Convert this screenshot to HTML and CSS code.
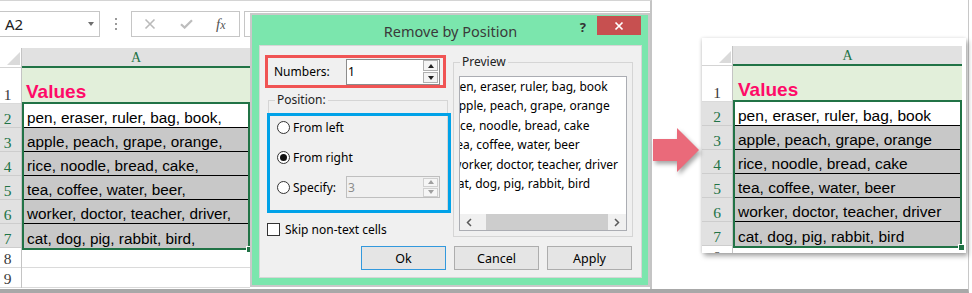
FILE: index.html
```html
<!DOCTYPE html>
<html>
<head>
<meta charset="utf-8">
<title>Remove by Position</title>
<link rel="stylesheet" href="styles.css">
</head>
<body>
<div class="frame">
  <div class="shot-left">
    <div class="fbar">
      <div class="namebox"><span class="nb-text">A2</span><span class="nb-arrow"></span></div>
      <div class="fdots"><i></i><i></i><i></i></div>
      <div class="fbtns">
        <svg class="ico" width="12" height="12" viewBox="0 0 12 12"><path d="M1.5 1.5L10.5 10.5M10.5 1.5L1.5 10.5" stroke="#bababa" stroke-width="1.6" fill="none"/></svg>
        <svg class="ico" width="13" height="10" viewBox="0 0 13 10"><path d="M1 5.2L4.6 8.6L12 1.2" stroke="#bdbdbd" stroke-width="2.2" fill="none"/></svg>
        <span class="fx">f<span class="fx-x">x</span></span>
      </div>
      <div class="finput"></div>
    </div>
    <div class="sheet">
      <div class="rowheads">
        <div class="corner"><span class="tri"></span></div>
        <div class="rh rh1">1</div>
        <div class="rh rhs">2</div>
        <div class="rh rhs">3</div>
        <div class="rh rhs">4</div>
        <div class="rh rhs">5</div>
        <div class="rh rhs">6</div>
        <div class="rh rhs">7</div>
        <div class="rh rh8">8</div>
        <div class="rh rh8">9</div>
      </div>
      <div class="col-a">
        <div class="colhead">A</div>
        <div class="c1"><span class="values">Values</span></div>
        <div class="selbox">
          <div class="d white">pen, eraser, ruler, bag, book,</div>
          <div class="d">apple, peach, grape, orange,</div>
          <div class="d">rice, noodle, bread, cake,</div>
          <div class="d">tea, coffee, water, beer,</div>
          <div class="d">worker, doctor, teacher, driver,</div>
          <div class="d last">cat, dog, pig, rabbit, bird,</div>
          <span class="handle"></span>
        </div>
        <div class="empty e8"></div>
        <div class="empty e9"></div>
      </div>
    </div>

    <div class="dialog">
      <div class="titlebar">
        <span></span>
        <span class="title">Remove by Position</span>
        <div class="tb-right">
          <span class="help">?</span>
          <span class="close"><svg width="10" height="10" viewBox="0 0 10 10"><path d="M1.5 1.5L8.5 8.5M8.5 1.5L1.5 8.5" stroke="#fff" stroke-width="1.7" fill="none"/></svg></span>
        </div>
      </div>
      <div class="panel">
        <div class="cols">
          <div class="left-col">
            <div class="numbox">
              <span class="lbl">Numbers:</span>
              <div class="spin">
                <span class="spin-val">1</span>
                <div class="spin-btns"><span class="sb up"></span><span class="sb down"></span></div>
              </div>
            </div>
            <fieldset class="grp pos">
              <legend>Position:</legend>
              <div class="bluebox">
                <div class="radio"><span class="rb"></span>From left</div>
                <div class="radio"><span class="rb on"></span>From right</div>
                <div class="radio"><span class="rb"></span>Specify:
                  <div class="spin dis">
                    <span class="spin-val">3</span>
                    <div class="spin-btns"><span class="sb up"></span><span class="sb down"></span></div>
                  </div>
                </div>
              </div>
            </fieldset>
            <div class="chk"><span class="cb"></span>Skip non-text cells</div>
          </div>
          <fieldset class="grp preview">
            <legend>Preview</legend>
            <div class="listbox">
              <div class="lines">
                <div>pen, eraser, ruler, bag, book</div>
                <div>apple, peach, grape, orange</div>
                <div>rice, noodle, bread, cake</div>
                <div>tea, coffee, water, beer</div>
                <div>worker, doctor, teacher, driver</div>
                <div>cat, dog, pig, rabbit, bird</div>
              </div>
              <div class="hscroll">
                <span class="sa"><svg width="6" height="9" viewBox="0 0 6 9"><path d="M5 1L1.5 4.5L5 8" stroke="#5a5a5a" stroke-width="1.5" fill="none"/></svg></span>
                <span class="thumb"></span>
                <span class="sa"><svg width="6" height="9" viewBox="0 0 6 9"><path d="M1 1L4.5 4.5L1 8" stroke="#5a5a5a" stroke-width="1.5" fill="none"/></svg></span>
              </div>
            </div>
          </fieldset>
        </div>
        <div class="btns">
          <button class="btn def">Ok</button>
          <button class="btn">Cancel</button>
          <button class="btn">Apply</button>
        </div>
      </div>
    </div>
  </div>

  <svg class="arrow" width="50" height="50" viewBox="0 0 50 50"><polygon points="1,13 25,13 25,2 47,24 25,46 25,35 1,35" fill="#ea6a7a"/></svg>

  <div class="shot-right">
    <div class="rowheads rowheads-r">
      <div class="corner corner-r"><span class="tri tri-r"></span></div>
      <div class="rh rh1">1</div>
      <div class="rh rhs">2</div>
      <div class="rh rhs">3</div>
      <div class="rh rhs">4</div>
      <div class="rh rhs">5</div>
      <div class="rh rhs">6</div>
      <div class="rh rhs">7</div>
      <div class="rh rh8">8</div>
    </div>
    <div class="col-a col-a-r">
      <div class="colhead">A</div>
      <div class="c1 c1-r"><span class="values">Values</span></div>
      <div class="selbox">
        <div class="d dr white">pen, eraser, ruler, bag, book</div>
        <div class="d dr">apple, peach, grape, orange</div>
        <div class="d dr">rice, noodle, bread, cake</div>
        <div class="d dr">tea, coffee, water, beer</div>
        <div class="d dr">worker, doctor, teacher, driver</div>
        <div class="d dr last">cat, dog, pig, rabbit, bird</div>
        <span class="handle"></span>
      </div>
      <div class="empty e8"></div>
    </div>
    <div class="col-b"></div>
  </div>
</div>
</body>
</html>
```

FILE: styles.css
```css
* { box-sizing: border-box; }
html, body { margin: 0; padding: 0; }
body {
  width: 972px;
  height: 293px;
  overflow: hidden;
  background: #fff;
  font-family: "Liberation Sans", Arial, sans-serif;
}
.frame {
  width: 969px;
  height: 293px;
  border-right: 1px solid #c8c8c8;
  border-bottom: 4px solid #a8a8a8;
  display: flex;
  align-items: flex-start;
}

/* ---------- left screenshot ---------- */
.shot-left {
  position: relative;
  width: 652px;
  height: 289px;
  border-top: 1px solid #d4d4d4;
  border-right: 2px solid #c4c4c4;
  overflow: hidden;
  background: #fff;
  flex: none;
}
.fbar {
  display: flex;
  align-items: center;
  height: 26px;
  margin-top: 10px;
}
.namebox {
  width: 100px;
  height: 26px;
  border: 1px solid #c6c6c6;
  border-left: none;
  display: flex;
  align-items: center;
  padding-left: 5px;
  font-family: "Noto Sans", sans-serif;
  font-size: 15px;
  color: #222;
}
.nb-arrow {
  margin-left: auto;
  margin-right: 5px;
  width: 0;
  height: 0;
  border-left: 3.5px solid transparent;
  border-right: 3.5px solid transparent;
  border-top: 4px solid #6e6e6e;
}
.fdots {
  width: 31px;
  display: flex;
  flex-direction: column;
  align-items: center;
  gap: 3px;
}
.fdots i {
  display: block;
  width: 2px;
  height: 2px;
  background: #9a9a9a;
}
.fbtns {
  width: 109px;
  height: 26px;
  border: 1px solid #c6c6c6;
  display: flex;
  align-items: center;
  gap: 24px;
  padding-left: 12px;
}
.ico { display: block; }
.fx {
  font-family: "Liberation Serif", serif;
  font-style: italic;
  font-size: 15px;
  color: #555;
  margin-left: -1px;
}
.fx-x { font-size: 12px; }
.finput {
  margin-left: 4px;
  flex: 1;
  height: 26px;
  border: 1px solid #c6c6c6;
  border-right: none;
}

.sheet {
  display: flex;
  margin-top: 11px;
}
.rowheads {
  width: 22px;
  border-right: 1px solid #c4c4c4;
  flex: none;
}
.corner {
  height: 20px;
  border-bottom: 1px solid #d4d4d4;
  display: flex;
  justify-content: flex-end;
  align-items: flex-end;
  padding: 0 1px 2px 0;
}
.tri {
  width: 0;
  height: 0;
  border-left: 13px solid transparent;
  border-bottom: 13px solid #dadada;
}
.rh {
  display: flex;
  align-items: flex-end;
  justify-content: center;
  padding-right: 6px;
  font-family: "Liberation Serif", serif;
  font-size: 15.5px;
  line-height: 16px;
  color: #3a3a3a;
  border-bottom: 1px solid #dadada;
  height: 24px;
  background: #fff;
}
.rh1 { height: 36px; }
.rh8 { height: 20px; }
.rhs {
  background: #e1e1e1;
  color: #217346;
  border-bottom-color: #cdcdcd;
}

.col-a { width: 228px; flex: none; }
.colhead {
  height: 20px;
  background: #e1e1e1;
  border-bottom: 2px solid #217346;
  text-align: center;
  font-family: "Liberation Serif", serif;
  font-size: 14px;
  line-height: 16px;
  padding-top: 2px;
  color: #217346;
}
.c1 {
  height: 34px;
  background: #e2efda;
  display: flex;
  align-items: flex-end;
  padding-left: 4px;
}
.values {
  font-weight: bold;
  font-size: 19px;
  line-height: 20px;
  color: #ff0a68;
}
.selbox {
  position: relative;
  border: 2px solid #217346;
}
.d {
  height: 24px;
  display: flex;
  align-items: flex-end;
  padding-left: 3px;
  font-size: 15.3px;
  line-height: 18px;
  background: #c8c8c8;
  border-bottom: 1px solid #000;
  white-space: nowrap;
  overflow: hidden;
  color: #000;
}
.d.white { background: #fff; }
.d.last { border-bottom: none; }
.handle {
  position: absolute;
  right: -5px;
  bottom: -5px;
  width: 7px;
  height: 7px;
  background: #217346;
  border: 1px solid #fff;
}
.empty {
  border-bottom: 1px solid #dadada;
  background: #fff;
}
.e8 { height: 18px; }
.e9 { height: 20px; }

/* ---------- dialog ---------- */
.dialog {
  position: absolute;
  left: 250px;
  top: 12px;
  width: 400px;
  height: 274px;
  border: 2px solid #c9c9c9;
  background: #7be6ad;
  padding: 0 6px 7px 7px;
  display: flex;
  flex-direction: column;
  font-family: "Noto Sans", sans-serif;
}
.titlebar {
  height: 30px;
  flex: none;
  display: grid;
  grid-template-columns: 1fr auto 1fr;
  align-items: center;
}
.title {
  font-size: 14.5px;
  color: #3a3a3a;
  padding-top: 1px;
}
.tb-right {
  display: flex;
  justify-content: flex-end;
  align-items: flex-start;
  align-self: start;
  height: 30px;
}
.help {
  font-weight: bold;
  font-size: 13px;
  line-height: 16px;
  color: #333;
  margin-top: 4px;
  margin-right: 11px;
}
.close {
  width: 44px;
  height: 19px;
  margin-top: 1px;
  margin-right: 1px;
  background: #c75050;
  display: flex;
  align-items: center;
  justify-content: center;
}
.close svg { display: block; }

.panel {
  height: 233px;
  flex: none;
  background: #f0f0f0;
  border: 1px solid #d6d6d6;
  padding: 8px 8px 0 5px;
  font-size: 12px;
  color: #000;
}
.cols {
  display: flex;
  gap: 2px;
  align-items: flex-start;
}
.left-col {
  width: 186px;
  padding-top: 1px;
}
.numbox {
  width: 181px;
  height: 33px;
  border: 3px solid #f05454;
  display: flex;
  align-items: center;
  padding-left: 6px;
}
.numbox .spin {
  margin-left: auto;
  margin-right: 3px;
  height: 26px;
}
.spin {
  width: 94px;
  display: flex;
  align-items: center;
  border: 1px solid #8c8c8c;
  background: #fff;
  padding-left: 1px;
}
.spin-val { flex: 1; }
.spin-btns {
  display: flex;
  flex-direction: column;
  gap: 1px;
  margin-right: 1px;
  width: 15px;
}
.sb {
  height: 11px;
  border: 1px solid #b0b0b0;
  background: #f4f4f4;
  display: flex;
  align-items: center;
  justify-content: center;
}
.sb::before {
  content: "";
  width: 0;
  height: 0;
  border-left: 3.5px solid transparent;
  border-right: 3.5px solid transparent;
}
.sb.up::before { border-bottom: 4px solid #222; }
.sb.down::before { border-top: 4px solid #222; }

.spin.dis {
  margin-left: auto;
  margin-right: 8px;
  height: 22px;
  background: #f0f0f0;
  border-color: #bfbfbf;
  color: #8c8c8c;
}
.spin.dis .sb {
  height: 9px;
  border-color: #d0d0d0;
  background: #f6f6f6;
}
.spin.dis .sb.up::before { border-bottom-color: #a0a0a0; }
.spin.dis .sb.down::before { border-top-color: #a0a0a0; }

.grp {
  margin: 0;
  padding: 0;
  border: 1px solid #d5d5d5;
  min-width: 0;
}
.grp legend {
  margin-left: 6px;
  padding: 0 2px;
  line-height: 16px;
  color: #222;
}
.pos {
  margin: 4px 0 0 3px;
  width: 180px;
}
.bluebox {
  margin: 5px 0 -2px -2px;
  width: 184px;
  height: 100px;
  border: 3px solid #00a2e8;
  padding-left: 7px;
  display: flex;
  flex-direction: column;
  gap: 8px;
}
.radio {
  height: 22px;
  display: flex;
  align-items: center;
}
.rb {
  width: 13px;
  height: 13px;
  border: 1px solid #333;
  border-radius: 50%;
  background: #fff;
  margin-right: 3px;
  display: flex;
  align-items: center;
  justify-content: center;
  flex: none;
}
.rb.on::after {
  content: "";
  width: 7px;
  height: 7px;
  border-radius: 50%;
  background: #111;
}
.chk {
  margin: 9px 0 0 2px;
  display: flex;
  align-items: center;
  height: 16px;
}
.cb {
  width: 13px;
  height: 13px;
  border: 1px solid #333;
  background: #fff;
  margin-right: 5px;
}

.preview { width: 180px; }
.listbox {
  margin: 6px 5px 5px;
  height: 155px;
  border: 1px solid #abadb3;
  background: #fff;
  display: flex;
  flex-direction: column;
}
.lines {
  flex: 1;
  overflow: hidden;
  line-height: 19.4px;
  white-space: nowrap;
}
.lines div { margin-left: -8px; }
.hscroll {
  height: 16px;
  flex: none;
  background: #f0f0f0;
  display: flex;
  align-items: stretch;
}
.sa {
  width: 17px;
  display: flex;
  align-items: center;
  justify-content: center;
}
.sa svg { display: block; }
.thumb {
  margin-left: 9px;
  width: 122px;
  background: #cdcdcd;
}
.btns {
  display: flex;
  justify-content: flex-end;
  gap: 8px;
  margin-top: 9px;
  padding-right: 1px;
}
.btn {
  width: 85px;
  height: 24px;
  border: 1px solid #adadad;
  background: #e5e5e5;
  font-family: "Noto Sans", sans-serif;
  font-size: 12.5px;
  color: #000;
  padding: 0;
}
.btn.def { border-color: #3399dd; }

/* ---------- arrow ---------- */
.arrow {
  flex: none;
  display: block;
  margin-top: 126px;
  filter: drop-shadow(2px 3px 2px rgba(0, 0, 0, 0.35));
}

/* ---------- right screenshot ---------- */
.shot-right {
  flex: none;
  margin-top: 38px;
  width: 264px;
  height: 215px;
  background: #fff;
  box-shadow: 2px 3px 5px rgba(0, 0, 0, 0.35), -1px 0 3px rgba(0, 0, 0, 0.1);
  padding-top: 8px;
  overflow: hidden;
  display: flex;
  align-items: flex-start;
}
.rowheads-r { width: 31px; }
.rowheads-r .rh { padding-right: 0; }
.tri-r {
  border-left-width: 12px;
  border-bottom-width: 12px;
}
.col-a-r { width: 229px; }
.c1-r { padding-left: 5px; }
.dr { font-size: 15.5px; }
.col-b {
  flex: 1;
  height: 228px;
  background: #fff;
}
```
